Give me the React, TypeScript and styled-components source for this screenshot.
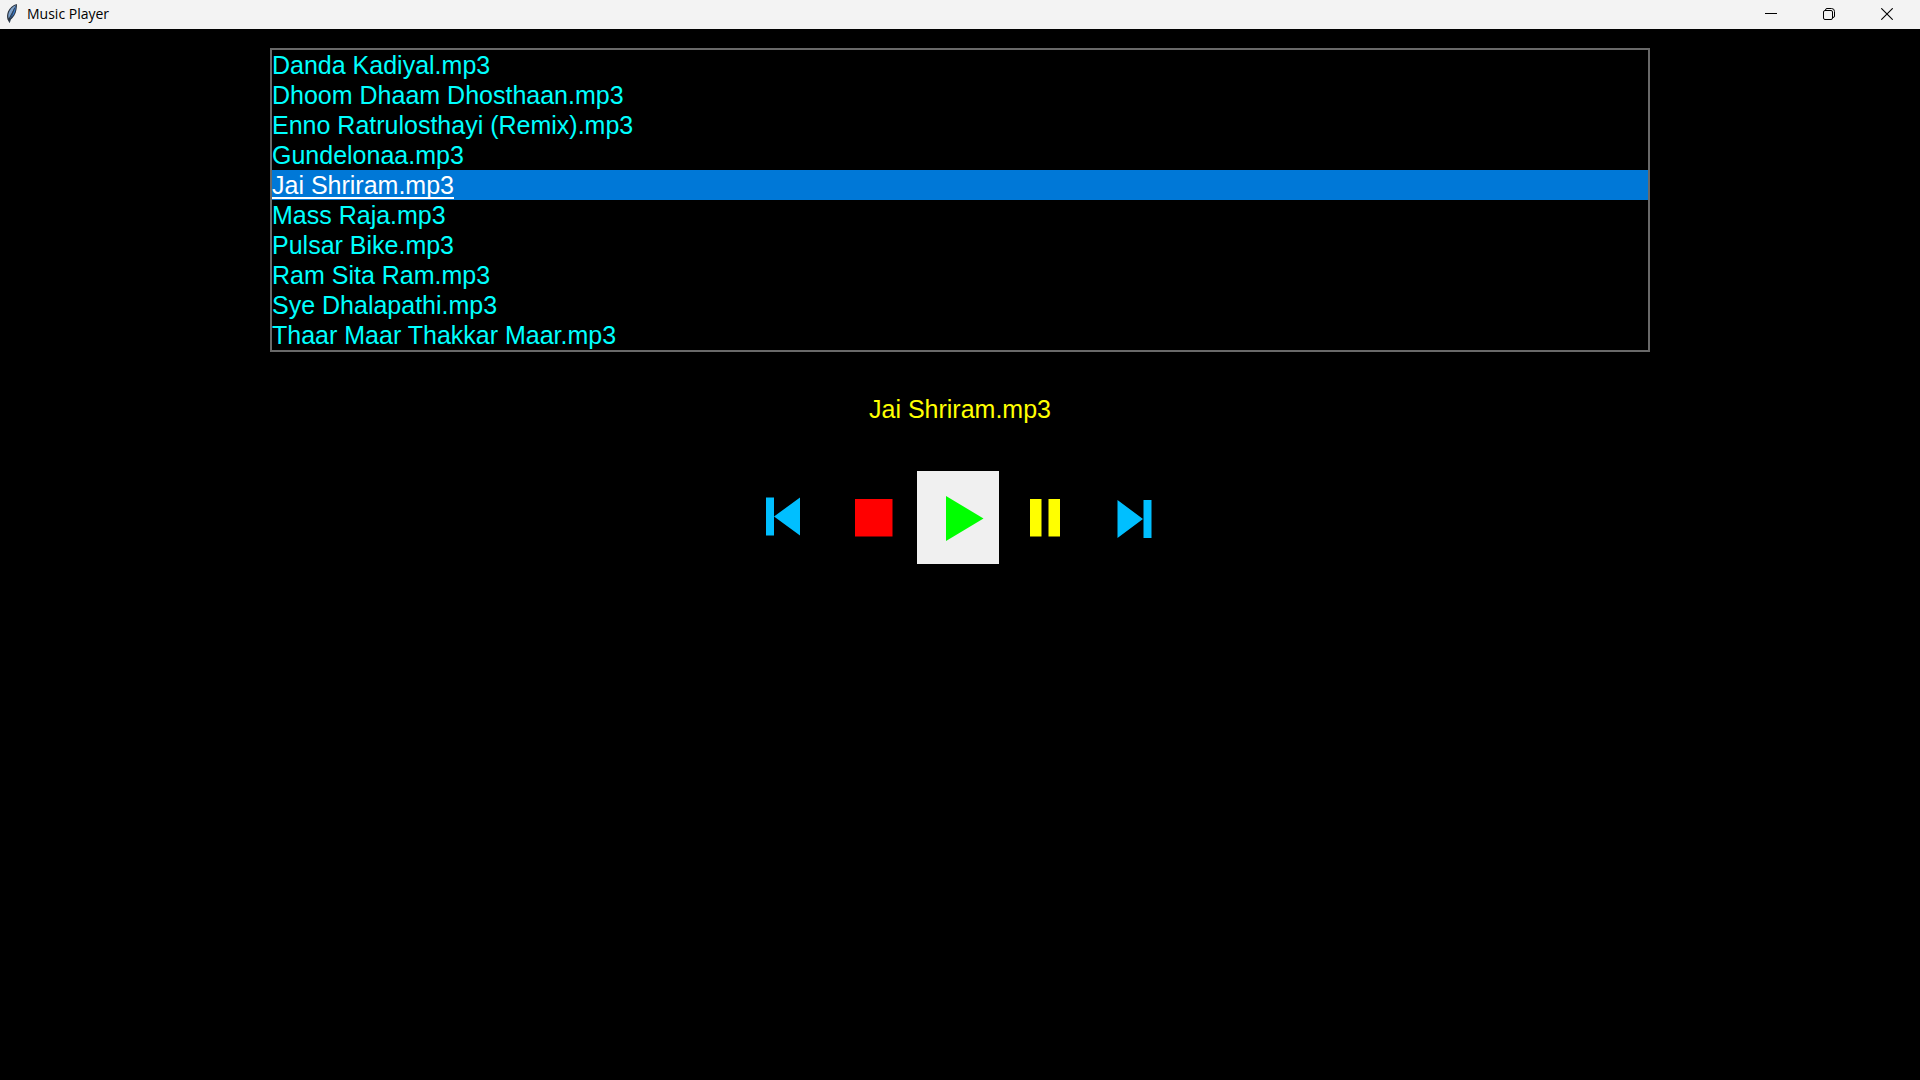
import React, { useState } from "react";
import styled, { createGlobalStyle } from "styled-components";

const GlobalStyle = createGlobalStyle`
  *, *::before, *::after { box-sizing: border-box; }
  body { margin: 0; background: #000; }
`;

const Window = styled.div`
  display: flex;
  flex-direction: column;
  min-height: 100vh;
  background: #000;
  font-family: "Liberation Sans", Arial, sans-serif;
`;

const TitleBar = styled.header`
  display: flex;
  align-items: flex-start;
  height: 29px;
  padding: 0 4px 0 5px;
  background: #f3f3f3;
`;

const Title = styled.h1`
  flex: 1;
  margin: 0 0 0 8px;
  color: #000;
  font: 400 14px/28px "Open Sans", "Noto Sans", sans-serif;
`;

const WindowButton = styled.button`
  display: flex;
  align-items: center;
  justify-content: center;
  width: 58px;
  height: 28px;
  padding: 0;
  border: 0;
  background: transparent;
`;

const Main = styled.main`
  display: flex;
  flex-direction: column;
  align-items: center;
  padding: 19px 16px;
`;

const TrackList = styled.ul`
  width: min(1380px, 100%);
  margin: 0;
  padding: 0;
  border: 2px solid #696969;
  list-style: none;
`;

const Track = styled.button<{ $selected: boolean }>`
  display: block;
  width: 100%;
  height: 30px;
  padding: 0;
  border: 0;
  background: ${(p) => (p.$selected ? "#0078d7" : "transparent")};
  color: ${(p) => (p.$selected ? "#fff" : "#00ffff")};
  font: 400 25px/30px "Liberation Sans", Arial, sans-serif;
  text-align: left;
  text-decoration: ${(p) => (p.$selected ? "underline 2px" : "none")};
  text-decoration-skip-ink: none;
  text-underline-offset: 3px;
`;

const NowPlaying = styled.p`
  margin: 42px 0 47px;
  color: #ffff00;
  font-size: 25px;
  line-height: 30px;
`;

const Controls = styled.div`
  display: flex;
`;

const ControlButton = styled.button<{ $width: number; $active?: boolean }>`
  display: flex;
  align-items: center;
  justify-content: center;
  width: ${(p) => p.$width}px;
  height: 93px;
  padding: 0;
  border: 0;
  background: ${(p) => (p.$active ? "#f0f0f0" : "transparent")};
`;

const Glyph = styled.svg`
  display: block;
`;

const AppIcon = styled(Glyph)`
  margin-top: 3px;
`;

const tracks = [
  "Danda Kadiyal.mp3",
  "Dhoom Dhaam Dhosthaan.mp3",
  "Enno Ratrulosthayi (Remix).mp3",
  "Gundelonaa.mp3",
  "Jai Shriram.mp3",
  "Mass Raja.mp3",
  "Pulsar Bike.mp3",
  "Ram Sita Ram.mp3",
  "Sye Dhalapathi.mp3",
  "Thaar Maar Thakkar Maar.mp3",
];

const controls = [
  { name: "Previous", width: 96, fill: "#00bfff", path: "M31 26.500h8v38h-8zM65 26.500v38L39 45.500z" },
  { name: "Stop", width: 86, fill: "#ff0000", path: "M24 28h37.500v37.500H24z" },
  { name: "Play", width: 82, fill: "#00ff00", path: "M29 25L66.500 47.500 29 70z" },
  { name: "Pause", width: 92, fill: "#ffff00", path: "M31 28h11.500v37.500H31zM49.500 28h11.500v37.500H49.500z" },
  { name: "Next", width: 94, fill: "#00bfff", path: "M26.500 29L52 48 26.500 67zM52.500 29h8v38h-8z" },
];

function Feather() {
  return (
    <AppIcon width="14" height="22" viewBox="0 0 14 22" aria-hidden="true">
      <path d="M11.800 1C8 2 4.500 5 3 8.500 1.800 11.500 1.800 14 2.500 16.500L4.500 20l.8-3C8.500 14.500 10.800 11 11.500 6.500c.3-2 .7-4 .3-5.500z" fill="#2b3440" />
      <path d="M11 2C7.500 3.500 4.800 6.500 3.700 10c-.6 2-.6 4 0 5.500z" fill="#7fa3cc" />
      <path d="M11 2.500L4.800 15.800C8.300 13.300 10 10 10.500 6.500z" fill="#3c7fd0" />
      <path d="M9.500 5L4.500 19.500" stroke="#26394f" strokeWidth=".7" fill="none" />
    </AppIcon>
  );
}

export default function App() {
  const [current, setCurrent] = useState(4);
  const step = (delta: number) =>
    setCurrent((index) => (index + delta + tracks.length) % tracks.length);

  return (
    <Window>
      <GlobalStyle />
      <TitleBar>
        <Feather />
        <Title>Music Player</Title>
        <WindowButton aria-label="Minimize">
          <Glyph width="12" height="12" viewBox="0 0 12 12" stroke="#000">
            <path d="M0 5.500h12" />
          </Glyph>
        </WindowButton>
        <WindowButton aria-label="Restore">
          <Glyph width="12" height="12" viewBox="0 0 12 12" fill="none" stroke="#000">
            <rect x=".5" y="2.500" width="9" height="9" rx="1.500" />
            <path d="M2.500 2.500V2A1.500 1.500 0 0 1 4 .5h4.500a3 3 0 0 1 3 3V8A1.500 1.500 0 0 1 10 9.500h-.5" />
          </Glyph>
        </WindowButton>
        <WindowButton aria-label="Close">
          <Glyph width="12" height="12" viewBox="0 0 12 12" stroke="#000" strokeWidth="1.100">
            <path d="M.3.3l11.400 11.400M11.700.3L.3 11.700" />
          </Glyph>
        </WindowButton>
      </TitleBar>
      <Main>
        <TrackList aria-label="Songs">
          {tracks.map((track, index) => (
            <li key={track}>
              <Track
                $selected={index === current}
                aria-pressed={index === current}
                onClick={() => setCurrent(index)}
              >
                {track}
              </Track>
            </li>
          ))}
        </TrackList>
        <NowPlaying>{tracks[current]}</NowPlaying>
        <Controls>
          {controls.map(({ name, width, fill, path }) => (
            <ControlButton
              key={name}
              $width={width}
              $active={name === "Play"}
              aria-label={name}
              onClick={() => {
                if (name === "Previous") step(-1);
                if (name === "Next") step(1);
              }}
            >
              <Glyph width={width} height="93" viewBox={`0 0 ${width} 93`} fill={fill}>
                <path d={path} />
              </Glyph>
            </ControlButton>
          ))}
        </Controls>
      </Main>
    </Window>
  );
}
